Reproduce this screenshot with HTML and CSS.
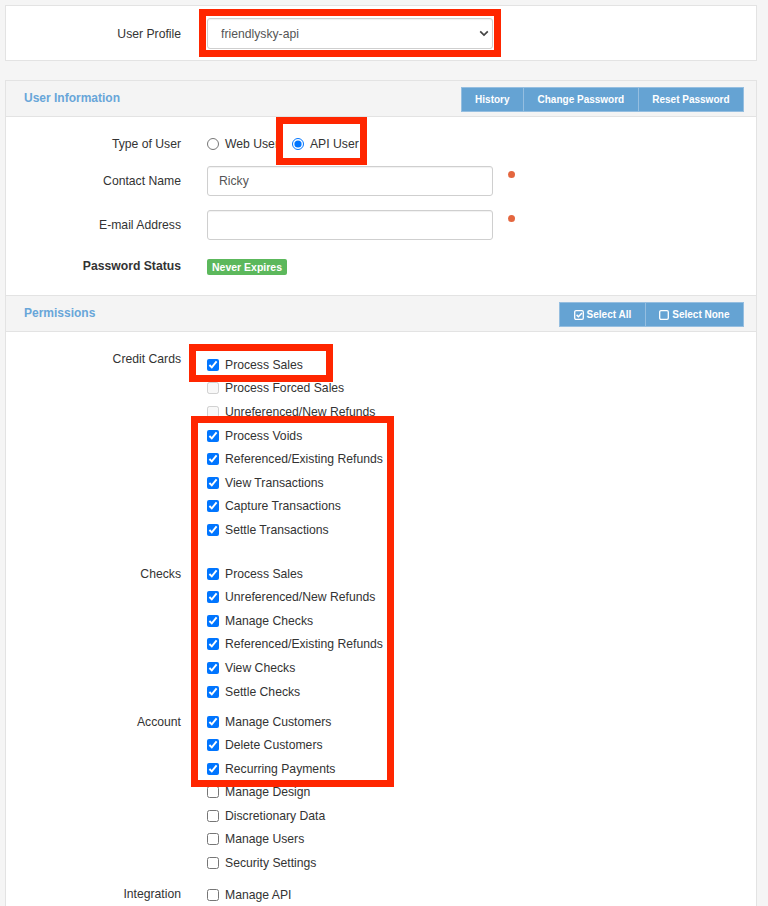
FILE: index.html
```html
<!DOCTYPE html>
<html lang="en">
<head>
<meta charset="utf-8">
<title>User Profile</title>
<link rel="stylesheet" href="styles.css">
</head>
<body>
<div class="page">
  <div class="panel profile">
    <div class="frow">
      <div class="lbl">User Profile</div>
      <div class="select-wrap">
        <select class="select"><option>friendlysky-api</option></select>
        <svg class="chev" width="10" height="7" viewBox="0 0 10 7"><path d="M1.2 1.3L5 5.1l3.8-3.8" fill="none" stroke="#444" stroke-width="1.7"/></svg>
      </div>
    </div>
  </div>

  <div class="panel main">
    <div class="phead">
      <div class="ptitle">User Information</div>
      <div class="btn-group">
        <span class="btn">History</span><span class="btn">Change Password</span><span class="btn">Reset Password</span>
      </div>
    </div>
    <div class="info-body">
      <div class="frow r-type">
        <div class="lbl">Type of User</div>
        <div class="radios">
          <label class="radio r-web"><input type="radio" name="t">Web User</label>
          <label class="radio"><input type="radio" name="t" checked>API User</label>
        </div>
      </div>
      <div class="frow r-contact">
        <div class="lbl">Contact Name</div>
        <input class="text" type="text" value="Ricky">
        <span class="req"></span>
      </div>
      <div class="frow r-email">
        <div class="lbl">E-mail Address</div>
        <input class="text" type="text" value="">
        <span class="req"></span>
      </div>
      <div class="frow r-pass">
        <div class="lbl bold">Password Status</div>
        <div><span class="badge">Never Expires</span></div>
      </div>
    </div>

    <div class="phead top-line">
      <div class="ptitle">Permissions</div>
      <div class="btn-group">
        <span class="btn btn-sel"><svg class="ico" width="10" height="10" viewBox="0 0 10 10"><rect x="0.7" y="0.7" width="8.6" height="8.6" rx="1.3" fill="none" stroke="#fff" stroke-width="1.3"/><path d="M2.6 4.9l1.8 1.8 3.6-3.8" fill="none" stroke="#fff" stroke-width="1.5"/></svg>Select All</span><span class="btn btn-sel"><svg class="ico" width="10" height="10" viewBox="0 0 10 10"><rect x="0.7" y="0.7" width="8.6" height="8.6" rx="1.3" fill="none" stroke="#fff" stroke-width="1.3"/></svg>Select None</span>
      </div>
    </div>
    <div class="perm-body">
      <div class="group g-cc">
        <div class="glabel">Credit Cards</div>
        <div class="items">
          <label class="item"><input type="checkbox" checked>Process Sales</label>
          <label class="item"><input type="checkbox" disabled>Process Forced Sales</label>
          <label class="item"><input type="checkbox" disabled>Unreferenced/New Refunds</label>
          <label class="item"><input type="checkbox" checked>Process Voids</label>
          <label class="item"><input type="checkbox" checked>Referenced/Existing Refunds</label>
          <label class="item"><input type="checkbox" checked>View Transactions</label>
          <label class="item"><input type="checkbox" checked>Capture Transactions</label>
          <label class="item"><input type="checkbox" checked>Settle Transactions</label>
        </div>
      </div>
      <div class="group g-ck">
        <div class="glabel">Checks</div>
        <div class="items">
          <label class="item"><input type="checkbox" checked>Process Sales</label>
          <label class="item"><input type="checkbox" checked>Unreferenced/New Refunds</label>
          <label class="item"><input type="checkbox" checked>Manage Checks</label>
          <label class="item"><input type="checkbox" checked>Referenced/Existing Refunds</label>
          <label class="item"><input type="checkbox" checked>View Checks</label>
          <label class="item"><input type="checkbox" checked>Settle Checks</label>
        </div>
      </div>
      <div class="group g-ac">
        <div class="glabel">Account</div>
        <div class="items">
          <label class="item"><input type="checkbox" checked>Manage Customers</label>
          <label class="item"><input type="checkbox" checked>Delete Customers</label>
          <label class="item"><input type="checkbox" checked>Recurring Payments</label>
          <label class="item"><input type="checkbox">Manage Design</label>
          <label class="item"><input type="checkbox">Discretionary Data</label>
          <label class="item"><input type="checkbox">Manage Users</label>
          <label class="item"><input type="checkbox">Security Settings</label>
        </div>
      </div>
      <div class="group g-in">
        <div class="glabel">Integration</div>
        <div class="items">
          <label class="item"><input type="checkbox">Manage API</label>
        </div>
      </div>
    </div>
    <div class="pfoot"></div>
  </div>

  <div class="mark m-select"></div>
  <div class="mark m-api"></div>
  <div class="mark m-sales"></div>
  <div class="mark m-list"></div>
</div>
</body>
</html>
```

FILE: styles.css
```css
* { box-sizing: border-box; }
html, body { margin: 0; padding: 0; }
body {
  background: #f5f5f5;
  font-family: "Liberation Sans", Arial, sans-serif;
  font-size: 12.2px;
  color: #333;
}
.page {
  position: relative;
  padding: 5px 11px 0 5px;
  height: 906px;
  overflow: hidden;
}
.panel {
  background: #fff;
  border: 1px solid #e3e3e3;
}
.profile {
  padding: 12px 0 11px;
}
.main {
  margin-top: 19px;
}
.frow {
  display: grid;
  grid-template-columns: 175px 286px auto;
  column-gap: 26px;
  align-items: center;
}
.lbl {
  text-align: right;
}
.bold { font-weight: bold; }
.select-wrap {
  position: relative;
  height: 31px;
}
.select {
  appearance: none;
  -webkit-appearance: none;
  width: 100%;
  height: 31px;
  border: 1px solid #cfcfcf;
  border-radius: 3px;
  background: #fff;
  padding: 0 0 0 13px;
  font-family: inherit;
  font-size: 12.2px;
  color: #555;
  box-shadow: inset 0 1px 1px rgba(0,0,0,.06);
}
.chev {
  position: absolute;
  right: 4px;
  top: 12px;
}
.phead {
  height: 36px;
  background: #f4f4f4;
  border-bottom: 1px solid #e3e3e3;
  display: flex;
  align-items: center;
  justify-content: space-between;
  padding: 0 12px 0 18px;
}
.phead.top-line {
  border-top: 1px solid #e3e3e3;
  height: 37px;
}
.ptitle {
  color: #68a6d9;
  font-weight: bold;
  font-size: 12px;
  margin-top: -2px;
}
.btn-group {
  display: flex;
  margin-top: 2px;
}
.btn {
  display: inline-flex;
  align-items: center;
  height: 25px;
  padding: 0 13.5px;
  background: #65a3d3;
  border: 1px solid #95bee0;
  color: #fff;
  font-weight: bold;
  font-size: 10px;
}
.btn + .btn { border-left: 0; }
.btn-sel { padding: 0 13.5px; }
.ico { margin-right: 3px; }
.info-body {
  padding: 17px 0 19px;
}
.r-type { height: 20px; }
.r-contact { margin-top: 12px; }
.r-email { margin-top: 14px; }
.r-pass { margin-top: 16px; height: 20px; }
.radios {
  display: flex;
  align-items: center;
  white-space: nowrap;
}
.radio {
  display: inline-flex;
  align-items: center;
  gap: 6px;
}
.radio input { margin: 0; width: 12px; height: 12px; }
.r-web { margin-right: 13px; }
.text {
  height: 30px;
  width: 100%;
  border: 1px solid #cfcfcf;
  border-radius: 3px;
  padding: 0 11px;
  font-family: inherit;
  font-size: 12.2px;
  color: #555;
  box-shadow: inset 0 1px 1px rgba(0,0,0,.06);
}
.req {
  align-self: start;
  margin-top: 5px;
  margin-left: -11px;
  width: 7px;
  height: 7px;
  border-radius: 50%;
  background: #e4663f;
}
.badge {
  display: inline-block;
  background: #5cb85c;
  color: #fff;
  font-weight: bold;
  font-size: 10.5px;
  line-height: 16px;
  padding: 0 5px;
  border-radius: 2px;
  margin-top: 2px;
}
.perm-body {
  padding: 15px 0 0;
}
.group {
  display: grid;
  grid-template-columns: 175px 1fr;
  column-gap: 26px;
}
.glabel {
  text-align: right;
  line-height: 20px;
  padding-top: 2px;
}
.g-cc .items { padding-top: 6px; }
.g-cc { margin-bottom: 20px; }
.g-ck { margin-bottom: 6.4px; }
.g-ac { margin-bottom: 8px; }
.g-in .glabel { padding-top: 1px; }
.item {
  display: flex;
  align-items: center;
  gap: 6px;
  height: 23.6px;
  white-space: nowrap;
}
.item input {
  margin: 0;
  width: 12px;
  height: 12px;
}
.pfoot {
  height: 40px;
  background: #f5f5f5;
  border-top: 1px solid #e3e3e3;
}
.mark {
  position: absolute;
  border: 7px solid #ff2600;
}
.m-select { left: 199px; top: 9px; width: 302px; height: 48px; }
.m-api { left: 276px; top: 117px; width: 91px; height: 48px; }
.m-sales { left: 189px; top: 344px; width: 144px; height: 38px; }
.m-list { left: 191px; top: 416px; width: 203px; height: 371px; }
```
